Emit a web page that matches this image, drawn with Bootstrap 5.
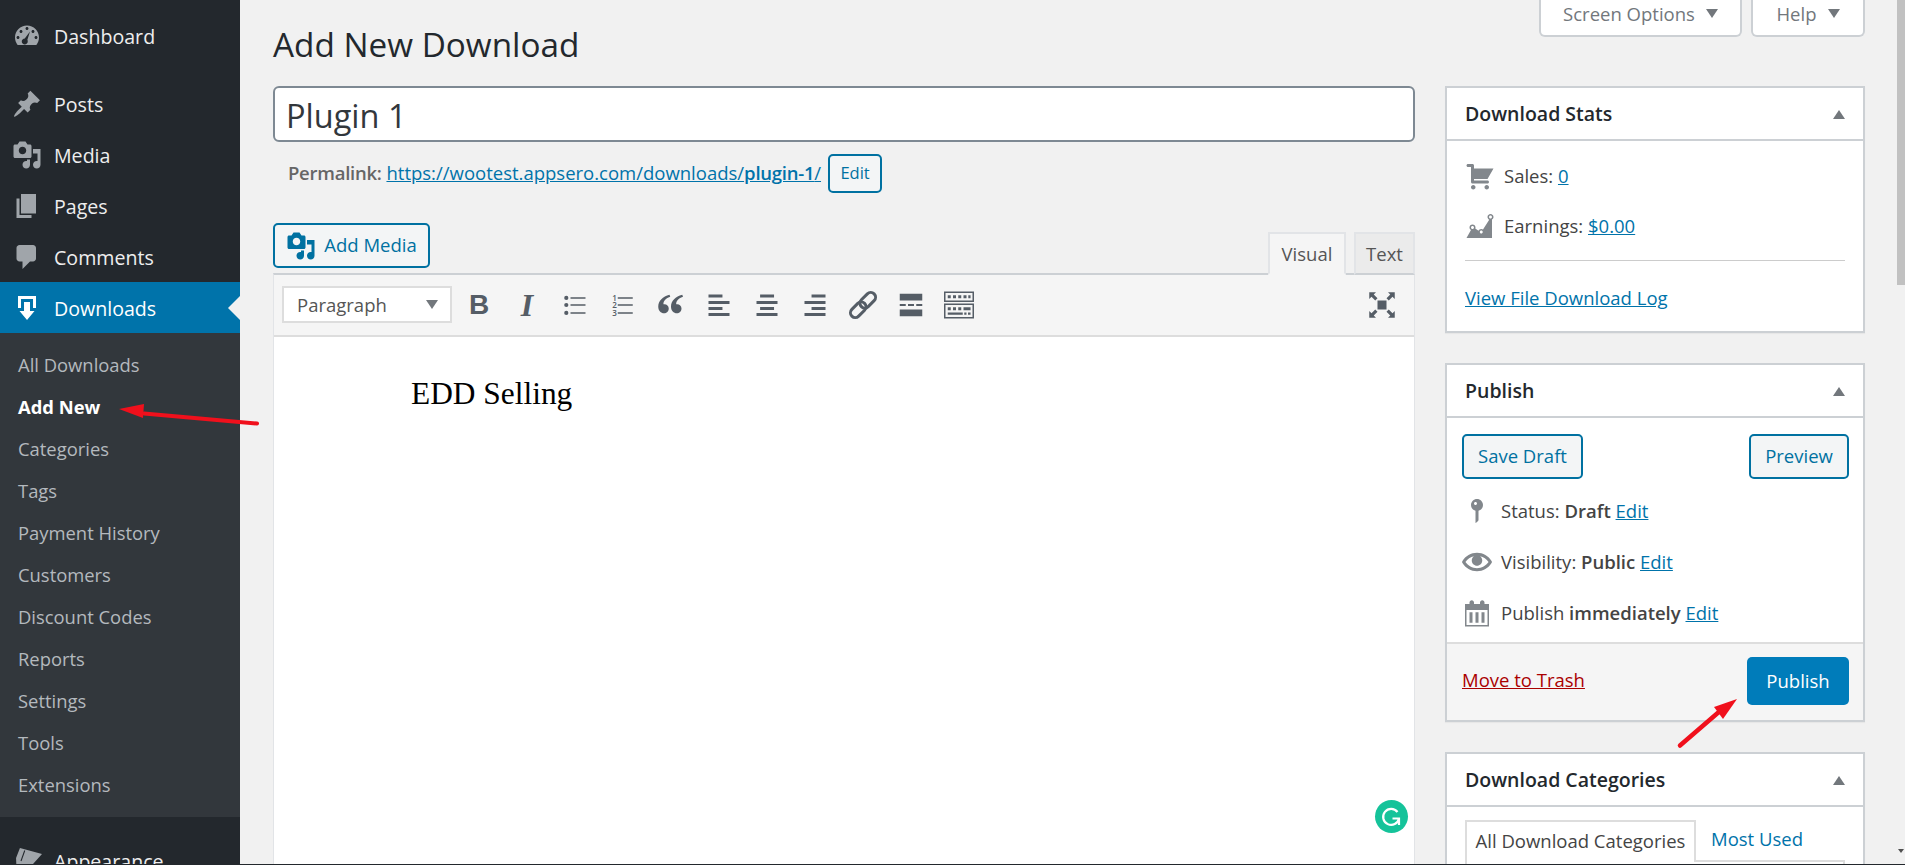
<!doctype html>
<html lang="en">
<head>
<meta charset="utf-8">
<title>Add New Download</title>
<link href="https://cdn.jsdelivr.net/npm/bootstrap@5.3.0/dist/css/bootstrap.min.css" rel="stylesheet">
<style>
html,body{height:865px;overflow:hidden}
body{background:#f1f1f1;color:#444;font-family:"Open Sans","Noto Sans",sans-serif;font-size:18.5px;line-height:1.4;position:relative}
a{color:#0073aa}
.wp-shell{height:865px;overflow:hidden}
.wp-side{width:240px;flex:none;background:#23282d;height:865px;overflow:hidden;padding-top:10px}
.wp-side svg{width:30px;height:30px;fill:#a0a5aa;flex:none;margin-top:-2px}
.side-item{height:51px;padding:2px 0 0 12px;gap:12px;color:#eee;font-size:19.6px;text-decoration:none;position:relative}
.side-gap{height:17px}
.side-item.is-on{background:#0073aa;color:#fff}
.side-item.is-on svg{fill:#fff}
.side-item.is-on::after{content:"";position:absolute;right:0;top:50%;margin-top:-12px;border:12px solid transparent;border-right-color:#f1f1f1;border-left:0}
.side-sub{background:#32373c;padding:11px 0;margin-bottom:18px}
.side-sub a{display:flex;align-items:center;height:42px;padding-left:18px;color:#b4b9be;text-decoration:none;font-size:18.4px}
.side-sub a.is-now{color:#fff;font-weight:700}
.wp-main{flex:1 1 auto;min-width:0;padding:0 40px 0 33px}
.top-row{height:86px}
.page-head{font-family:inherit;font-size:33.3px;font-weight:400;color:#23282d;margin:0;padding-top:21px;line-height:46px}
.meta-tabs{gap:9px}
.meta-btn{height:37px;border:2px solid #ccd0d4;border-top:0;border-radius:0 0 6px 6px;background:#fff;color:#72777c;font-size:18.5px;padding:0 0 8px;gap:11px;justify-content:center}
.meta-wide{width:203px}
.meta-slim{width:114px}
.tri-down{width:0;height:0;border:6px solid transparent;border-top:9px solid #72777c;border-bottom:0;display:inline-block}
.tri-up{width:0;height:0;border:6px solid transparent;border-bottom:9px solid #72777c;border-top:0;display:inline-block}
.left-col{width:1142px;flex:none}
.right-col{width:420px;flex:none}
.title-field{height:56px;border:2px solid #7e8993;border-radius:6px;font-size:32.5px;color:#32373c;padding:2px 11px 0;background:#fff;box-shadow:none}
.slug-row{margin-top:12px;height:39px;padding-left:15px;color:#666;gap:7px}
.slug-row span{padding-bottom:2px}
.slug-row b{font-weight:600;letter-spacing:-.25px}
.wp-btn{border:2px solid #0071a1;background:#f3f5f6;color:#0071a1;border-radius:5px;font-size:18.5px;line-height:1;padding:0;display:inline-flex;align-items:center;justify-content:center}
.wp-btn:hover{background:#f3f5f6;color:#0071a1;border-color:#0071a1}
.wp-btn svg{width:30px;height:30px;fill:#0071a1}
.btn-edit{width:54px;height:39px;font-size:16.5px}
.media-row{margin-top:30px;height:50px}
.btn-media{width:157px;height:45px;gap:8px}
.edit-tabs{gap:8px;margin-bottom:-2px;position:relative;z-index:1;align-items:flex-end}
.edit-tab{height:43px;border:2px solid #e2e4e7;color:#555;display:flex;align-items:center;justify-content:center;font-size:18.5px}
.tab-vis{width:78px;background:#f5f5f5;border-bottom-color:#f5f5f5}
.tab-txt{width:61px;background:#ebebeb;border-bottom-color:#ccd0d4}
.editor-wrap{border-top:2px solid #ccd0d4;border-left:1px solid #e2e4e7;border-right:1px solid #e2e4e7}
.tool-strip{height:62px;background:#f5f5f5;border-bottom:2px solid #ddd;padding:11px 17px 0 8px}
.fmt-pick{width:170px;height:37px;border:2px solid #ddd;background:#fff;color:#555;font-size:18.5px;padding:0 12px 0 13px;margin-right:3px}
.tool-ico{width:48px;height:37px;display:flex;align-items:center;justify-content:center;color:#555d66}
.tool-ico svg{fill:#555d66;width:30px;height:30px}
.tool-ico text{font-family:"Open Sans",sans-serif;font-size:5.400px;font-weight:600;fill:#555d66}
.glyph-b{font-family:"Liberation Sans",sans-serif;font-weight:700;font-size:28px;line-height:1}
.glyph-i{font-family:"Liberation Serif",serif;font-weight:700;font-style:italic;font-size:32px;line-height:1}
.editor-body{background:#fff;height:600px;padding:27px 0 0 137px;font-family:"Liberation Serif",serif;font-size:31.4px;color:#000;position:relative;line-height:60px}
.g-badge{position:absolute;left:1101px;top:463px;width:33px;height:33px;border-radius:50%;background:#15c39a}
.g-badge svg{width:33px;height:33px;display:block}
.wp-box{border:2px solid #ccd0d4;border-radius:0;background:#fff;margin-bottom:30px;box-shadow:0 1px 1px rgba(0,0,0,.04)}
.box-head{height:53px;border-bottom:2px solid #ccd0d4;background:#fff;padding:1px 18px 0;font-size:19.5px;font-weight:600;color:#23282d;border-radius:0}
.stat-body{padding:0 18px;height:190px}
.stat-line{height:50px;gap:9px;color:#444}
.stat-line svg{width:30px;height:30px;fill:#82878c;flex:none}
.stat-rule{border-top:1px solid #ccc;margin:9px 0 0;opacity:1}
.log-link{display:block;margin-top:24px}
.pub-body{padding:16px 14px 0 15px;height:224px}
.pub-top{height:45px;margin-bottom:6px}
.btn-draft{width:121px;height:45px}
.btn-prev{width:100px;height:45px}
.pub-line{height:51px;gap:9px;color:#444}
.pub-line svg{width:30px;height:30px;fill:#82878c;flex:none}
.pub-line b{font-weight:600}
.pub-foot{height:78px;background:#f5f5f5;border-top:2px solid #ddd;padding:13px 14px 0 15px}
.trash-link{color:#a00;margin-top:10px}
.btn-publish{width:102px;height:48px;background:#007cba;border:0;color:#fff;border-radius:5px;font-size:18.5px}
.btn-publish:hover{background:#007cba;color:#fff}
.cat-tabs{padding:13px 18px 0}
.cat-on{width:231px;height:42px;border:2px solid #ddd;border-bottom:0;white-space:nowrap;font-size:18.5px;color:#444;padding-bottom:3px}
.cat-off{padding:0 0 3px 15px;color:#0073aa;font-size:18.5px;height:42px;border-bottom:2px solid #ddd;flex:1 1 auto}
.cat-panel{height:20px;margin:0 18px;border:2px solid #ddd;border-top:0;border-bottom:0}
.mark-arrows{position:absolute;left:0;top:0;width:1905px;height:865px;pointer-events:none;z-index:5}
.fake-scroll{position:absolute;right:0;top:0;width:8px;height:285px;background:#c1c1c1;z-index:6}
.scroll-down{position:absolute;right:1px;top:849px;border:3px solid transparent;border-top:4px solid #505050;border-bottom:0;z-index:6}
.bottom-line{position:absolute;left:0;right:0;bottom:0;height:1px;background:#23282d;z-index:7}
</style>
</head>
<body>
<div class="wp-shell d-flex">
  <nav class="wp-side">
    <a class="side-item d-flex align-items-center" href="#"><svg viewBox="0 0 20 20"><path d="M3.76 16h12.48c1.1-1.37 1.76-3.11 1.76-5 0-4.42-3.58-8-8-8s-8 3.58-8 8c0 1.89.66 3.63 1.76 5zM10 4c.55 0 1 .45 1 1s-.45 1-1 1-1-.45-1-1 .45-1 1-1zM6 6c.55 0 1 .45 1 1s-.45 1-1 1-1-.45-1-1 .45-1 1-1zm8 0c.55 0 1 .45 1 1s-.45 1-1 1-1-.45-1-1 .45-1 1-1zm-5.37 5.55L12 7l-1.75 5.57c.15.33.25.69.25 1.06 0 1.1-.9 2-2 2s-2-.9-2-2 .9-2 2-2c.04 0 .09 0 .13 0zM4 10c.55 0 1 .45 1 1s-.45 1-1 1-1-.45-1-1 .45-1 1-1zm12 0c.55 0 1 .45 1 1s-.45 1-1 1-1-.45-1-1 .45-1 1-1z" fill-rule="evenodd"/></svg>Dashboard</a>
    <div class="side-gap"></div>
    <a class="side-item d-flex align-items-center" href="#"><svg viewBox="0 0 20 20"><path d="M10.44 3.02l1.82-1.82 6.36 6.35-1.83 1.82c-1.05-.68-2.48-.57-3.41.36l-.75.75c-.92.93-1.04 2.35-.35 3.41l-1.83 1.82-2.41-2.41-2.8 2.79c-.42.42-3.38 2.71-3.8 2.29s1.86-3.39 2.28-3.81l2.79-2.79L4.1 9.36l1.83-1.82c1.05.69 2.48.57 3.41-.36l.75-.75c.93-.92 1.05-2.35.35-3.41z"/></svg>Posts</a>
    <a class="side-item d-flex align-items-center" href="#"><svg viewBox="0 0 20 20"><path fill-rule="evenodd" d="M13 11V4c0-.55-.45-1-1-1h-1.67L9 1H5L3.67 3H2c-.55 0-1 .45-1 1v7c0 .55.45 1 1 1h10c.55 0 1-.45 1-1zM7 4.5c1.38 0 2.5 1.12 2.5 2.5S8.38 9.5 7 9.5 4.5 8.38 4.5 7 5.62 4.5 7 4.5zM14 6h5v10.5c0 1.38-1.12 2.5-2.5 2.5S14 17.88 14 16.5s1.12-2.5 2.5-2.5c.17 0 .34.02.5.05V9h-3V6zm-4 8.05V13h2v3.5c0 1.38-1.12 2.5-2.5 2.5S7 17.88 7 16.5 8.12 14 9.5 14c.17 0 .34.02.5.05z"/></svg>Media</a>
    <a class="side-item d-flex align-items-center" href="#"><svg viewBox="0 0 20 20"><path d="M6 15V2h10v13H6zm-1 1h8v2H3V5h2v11z"/></svg>Pages</a>
    <a class="side-item d-flex align-items-center" href="#"><svg viewBox="0 0 20 20"><path d="M5 2h9c1.1 0 2 .9 2 2v7c0 1.1-.9 2-2 2h-2l-5 5v-5H5c-1.1 0-2-.9-2-2V4c0-1.1.9-2 2-2z"/></svg>Comments</a>
    <a class="side-item is-on d-flex align-items-center" href="#"><svg viewBox="0 0 20 20"><path d="M14.01 4v6h2V2H4v8h2.01V4h8zm-2 2v6h3l-5 6-5-6h3V6h4z"/></svg>Downloads</a>
    <div class="side-sub">
      <a href="#">All Downloads</a>
      <a href="#" class="is-now">Add New</a>
      <a href="#">Categories</a>
      <a href="#">Tags</a>
      <a href="#">Payment History</a>
      <a href="#">Customers</a>
      <a href="#">Discount Codes</a>
      <a href="#">Reports</a>
      <a href="#">Settings</a>
      <a href="#">Tools</a>
      <a href="#">Extensions</a>
    </div>
    <a class="side-item d-flex align-items-center" href="#"><svg viewBox="0 0 20 20"><path d="M5.300 1.300 20 5.300 14 12l-1 3H3l-.3-7z"/><path d="M8.500 3 6 10" stroke="#23282d" stroke-width=".7" fill="none"/></svg>Appearance</a>
  </nav>
  <main class="wp-main">
    <div class="top-row d-flex justify-content-between align-items-start">
      <h1 class="page-head">Add New Download</h1>
      <div class="meta-tabs d-flex">
        <div class="meta-btn meta-wide d-flex align-items-center">Screen Options <span class="tri-down"></span></div>
        <div class="meta-btn meta-slim d-flex align-items-center">Help <span class="tri-down"></span></div>
      </div>
    </div>
    <div class="d-flex gap-0 justify-content-between">
      <div class="left-col">
        <input class="form-control title-field" type="text" value="Plugin 1" aria-label="Title">
        <div class="slug-row d-flex align-items-center">
          <span><b>Permalink:</b> <a href="#">https://wootest.appsero.com/downloads/<b>plugin-1</b>/</a></span>
          <button class="btn wp-btn btn-edit" type="button">Edit</button>
        </div>
        <div class="media-row d-flex justify-content-between">
          <button class="btn wp-btn btn-media" type="button"><svg viewBox="0 0 20 20"><path fill-rule="evenodd" d="M13 11V4c0-.55-.45-1-1-1h-1.67L9 1H5L3.67 3H2c-.55 0-1 .45-1 1v7c0 .55.45 1 1 1h10c.55 0 1-.45 1-1zM7 4.500c1.380 0 2.500 1.120 2.500 2.500S8.380 9.500 7 9.500 4.500 8.380 4.500 7 5.620 4.500 7 4.500zM14 6h5v10.500c0 1.380-1.120 2.500-2.500 2.500S14 17.880 14 16.500s1.120-2.500 2.500-2.500c.17 0 .34.02.5.05V9h-3V6zm-4 8.050V13h2v3.500c0 1.380-1.120 2.500-2.500 2.500S7 17.880 7 16.500 8.120 14 9.500 14c.17 0 .34.02.5.05z"/></svg>Add Media</button>
          <div class="edit-tabs d-flex">
            <div class="edit-tab tab-vis">Visual</div>
            <div class="edit-tab tab-txt">Text</div>
          </div>
        </div>
        <div class="editor-wrap">
          <div class="tool-strip d-flex align-items-start">
            <div class="fmt-pick d-flex align-items-center justify-content-between">Paragraph <span class="tri-down"></span></div>
            <div class="tool-ico"><span class="glyph-b">B</span></div>
            <div class="tool-ico"><span class="glyph-i">I</span></div>
            <div class="tool-ico"><svg viewBox="0 0 20 20"><path d="M2.800 5.300a1.400 1.400 0 1 0 2.800 0 1.400 1.400 0 1 0-2.800 0zM2.800 10a1.400 1.400 0 1 0 2.800 0 1.400 1.400 0 1 0-2.800 0zM2.800 15.300a1.400 1.400 0 1 0 2.800 0 1.400 1.400 0 1 0-2.800 0zM7 4.800h10v1H7zM7 9.500h10v1H7zM7 14.800h10v1H7z"/></svg></div>
            <div class="tool-ico"><svg viewBox="0 0 20 20"><text x="2.800" y="7.200">1</text><text x="2.800" y="12">2</text><text x="2.800" y="17.200">3</text><path d="M6.500 4.800h10v1h-10zM6.500 9.500h10v1h-10zM6.500 14.800h10v1h-10z"/></svg></div>
            <div class="tool-ico"><svg viewBox="0 0 20 20"><path d="M9.500 4.500C6 5.500 4.800 8 5 9.500c1.800-.4 3.500.9 3.500 2.800 0 1.900-1.400 3.200-3.100 3.200C3.300 15.500 1.500 14 1.500 11c0-3.500 3-6.800 7.500-7.800zM18 4.500c-3.500 1-4.700 3.500-4.500 5 1.800-.4 3.500.9 3.500 2.800 0 1.900-1.400 3.200-3.100 3.200-2.100 0-3.900-1.500-3.900-4.500 0-3.500 3-6.800 7.500-7.800z"/></svg></div>
            <div class="tool-ico"><svg viewBox="0 0 20 20"><path d="M3 3h9.300v2H3zM3 7.300h14v2H3zM3 11.300h9.300v2H3zM3 15.300h14v2H3z"/></svg></div>
            <div class="tool-ico"><svg viewBox="0 0 20 20"><path d="M5.400 3h9.300v2H5.400zM3 7.300h14v2H3zM5.400 11.300h9.300v2H5.400zM3 15.300h14v2H3z"/></svg></div>
            <div class="tool-ico"><svg viewBox="0 0 20 20"><path d="M7.700 3H17v2H7.700zM3 7.300h14v2H3zM7.700 11.300H17v2H7.700zM3 15.300h14v2H3z"/></svg></div>
            <div class="tool-ico"><svg viewBox="0 0 20 20"><g fill="none" stroke="#555d66" stroke-width="2" transform="rotate(-45 10 10)"><rect x="-.5" y="6.800" width="12" height="6.400" rx="3.200"/><rect x="8.500" y="6.800" width="12" height="6.400" rx="3.200"/></g></svg></div>
            <div class="tool-ico"><svg viewBox="0 0 20 20"><path d="M2.500 2.500h15v4.500h-15zM2.500 13h15v4.500h-15zM2.500 9.300h4v1.400h-4zM8 9.300h4v1.400H8zM13.500 9.300h4v1.400h-4z"/></svg></div>
            <div class="tool-ico"><svg viewBox="0 0 20 20"><path fill-rule="evenodd" d="M0 1h20v7H0zM1 2v5h18V2zM2.500 3.500h2v2h-2zM6 3.500h2v2H6zM9.500 3.500h2v2h-2zM13 3.500h2v2h-2zM16.200 3.500h1.500v2h-1.500zM0 9h20v10H0zM1 10v8h18v-8zM2.500 11.500h2v2h-2zM6 11.500h2v2H6zM9.500 11.500h2v2h-2zM13 11.500h4.700v2H13zM2.500 15h10v1.500h-10zM13.500 15h1.500v1.500h-1.500zM16 15h1.700v1.500H16z"/></svg></div>
            <div class="tool-ico ms-auto" style="width:30px"><svg viewBox="0 0 20 20"><path d="M7 7h6v6H7zM1.500 1.500H6L4.500 3 7 5.500 5.500 7 3 4.500 1.500 6zM18.500 1.500V6L17 4.500 14.500 7 13 5.500 15.500 3 14 1.500zM1.500 18.500V14L3 15.500 5.500 13 7 14.500 4.500 17 6 18.500zM18.500 18.500H14l1.500-1.500L13 14.500l1.500-1.500 2.500 2.500 1.500-1.500z"/></svg></div>
          </div>
          <div class="editor-body">EDD Selling
            <div class="g-badge"><svg viewBox="0 0 33 33"><path d="M22.500 12a8 8 0 1 0 1.500 6.500" fill="none" stroke="#fff" stroke-width="2.200"/><path d="M17.500 18.500h6.500v6.500" fill="none" stroke="#fff" stroke-width="2.200"/></svg></div>
          </div>
        </div>
      </div>
      <div class="right-col">
        <div class="card wp-box">
          <div class="box-head d-flex align-items-center justify-content-between">Download Stats <span class="tri-up"></span></div>
          <div class="stat-body">
            <div style="height:10px"></div>
            <div class="stat-line d-flex align-items-center"><svg viewBox="0 0 20 20"><path d="M6 13h9c.55 0 1 .45 1 1s-.45 1-1 1H5c-.55 0-1-.45-1-1V4H2c-.55 0-1-.45-1-1s.45-1 1-1h3c.55 0 1 .45 1 1v2h13l-4 7H6v1zm-.5 3c.83 0 1.500.67 1.500 1.500S6.330 19 5.500 19 4 18.330 4 17.500 4.670 16 5.500 16zm9 0c.83 0 1.500.67 1.500 1.500s-.67 1.500-1.500 1.500-1.500-.67-1.500-1.500.67-1.500 1.500-1.500z"/></svg><span>Sales: <a href="#">0</a></span></div>
            <div class="stat-line d-flex align-items-center"><svg viewBox="0 0 20 20"><path fill-rule="evenodd" d="M18 18l.01-12.280c.59-.35.99-.99.99-1.720 0-1.100-.9-2-2-2s-2 .9-2 2c0 .8.47 1.480 1.140 1.800l-4.130 6.580c-.33-.24-.73-.38-1.160-.38-.84 0-1.550.51-1.850 1.240l-2.140-1.530c.09-.22.14-.46.14-.71 0-1.110-.89-2-2-2-1.100 0-2 .89-2 2 0 .73.4 1.360.98 1.710L1 18h17zM17 3c.55 0 1 .45 1 1s-.45 1-1 1-1-.45-1-1 .45-1 1-1zM5 10c.55 0 1 .45 1 1s-.45 1-1 1-1-.45-1-1 .45-1 1-1zm5.850 3c.55 0 1 .45 1 1s-.45 1-1 1-1-.45-1-1 .45-1 1-1z"/></svg><span>Earnings: <a href="#">$0.00</a></span></div>
            <hr class="stat-rule">
            <a class="log-link" href="#">View File Download Log</a>
          </div>
        </div>
        <div class="card wp-box">
          <div class="box-head d-flex align-items-center justify-content-between">Publish <span class="tri-up"></span></div>
          <div class="pub-body">
            <div class="pub-top d-flex justify-content-between">
              <button class="btn wp-btn btn-draft" type="button">Save Draft</button>
              <button class="btn wp-btn btn-prev" type="button">Preview</button>
            </div>
            <div class="pub-line d-flex align-items-center"><svg viewBox="0 0 20 20"><path fill-rule="evenodd" d="M14 6c0 1.860-1.280 3.410-3 3.860V16c0 1-2 2-2 2V9.860c-1.720-.45-3-2-3-3.860 0-2.210 1.790-4 4-4s4 1.790 4 4zM8 5c0 .55.45 1 1 1s1-.45 1-1-.45-1-1-1-1 .45-1 1z"/></svg><span>Status: <b>Draft</b> <a href="#">Edit</a></span></div>
            <div class="pub-line d-flex align-items-center"><svg viewBox="0 0 20 20"><path fill-rule="evenodd" d="M19.700 9.400C17.700 6 14 3.900 10 3.900S2.300 6 .3 9.400L0 10l.3.6c2 3.400 5.700 5.500 9.700 5.500s7.700-2.100 9.700-5.500l.3-.6-.3-.6zM10 14.100c-3.100 0-6-1.600-7.700-4.100C3.600 8 5.700 6.600 8 6.100c-.9.6-1.500 1.700-1.500 2.900 0 1.900 1.600 3.500 3.500 3.500s3.500-1.600 3.500-3.500c0-1.200-.6-2.300-1.500-2.900 2.300.5 4.400 1.900 5.700 3.900-1.700 2.500-4.600 4.100-7.700 4.100z"/></svg><span>Visibility: <b>Public</b> <a href="#">Edit</a></span></div>
            <div class="pub-line d-flex align-items-center"><svg viewBox="0 0 20 20"><path fill-rule="evenodd" d="M15 4h3v15H2V4h3V3c0-.41.15-.76.44-1.060.29-.29.65-.44 1.060-.44s.77.15 1.060.44c.29.3.44.65.44 1.060v1h4V3c0-.41.15-.76.44-1.060.29-.29.65-.44 1.060-.44s.77.15 1.060.44c.29.3.44.65.44 1.060v1zM3 8v10h14V8zM5 9.500h2v7H5zM9 9.500h2v7H9zM13 9.500h2v7h-2z"/></svg><span>Publish <b>immediately</b> <a href="#">Edit</a></span></div>
          </div>
          <div class="pub-foot d-flex justify-content-between align-items-start">
            <a class="trash-link" href="#">Move to Trash</a>
            <button class="btn btn-publish" type="button">Publish</button>
          </div>
        </div>
        <div class="card wp-box">
          <div class="box-head d-flex align-items-center justify-content-between">Download Categories <span class="tri-up"></span></div>
          <div class="cat-tabs d-flex">
            <div class="cat-on d-flex align-items-center justify-content-center">All Download Categories</div>
            <div class="cat-off d-flex align-items-center">Most Used</div>
          </div>
          <div class="cat-panel"></div>
        </div>
      </div>
    </div>
  </main>
</div>
<svg class="mark-arrows" viewBox="0 0 1905 865" aria-hidden="true">
  <path d="M257 423.500 144 413.500" stroke="#f0101c" stroke-width="4" stroke-linecap="round" fill="none"/>
  <path d="M119 409 144 404 143 418z" fill="#f0101c"/>
  <path d="M1680 745.500 1720 711" stroke="#f0101c" stroke-width="4.500" stroke-linecap="round" fill="none"/>
  <path d="M1737 699 1714 707 1723 719z" fill="#f0101c"/>
</svg>
<div class="fake-scroll"></div>
<div class="scroll-down"></div>
<div class="bottom-line"></div>
<script src="https://cdn.jsdelivr.net/npm/bootstrap@5.3.0/dist/js/bootstrap.bundle.min.js"></script>
</body>
</html>
